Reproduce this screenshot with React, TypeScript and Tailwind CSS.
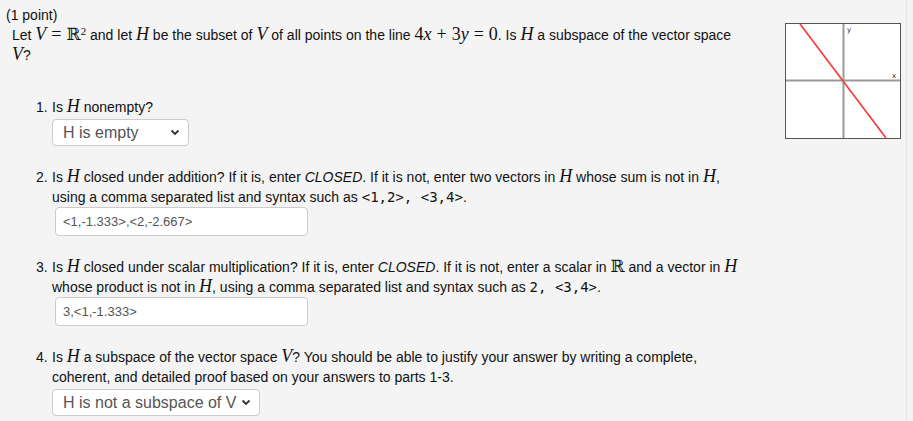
import React from 'react';

// math helpers (MathJax look-alike)
const V = ({ children }: { children: React.ReactNode }) => (
  <span className="font-['Liberation_Serif'] italic text-[18px] leading-none">{children}</span>
);
const N = ({ children }: { children: React.ReactNode }) => (
  <span className="font-['Liberation_Serif'] text-[18px] leading-none">{children}</span>
);
const Op = ({ children }: { children: React.ReactNode }) => (
  <span className="font-['Liberation_Serif'] text-[18px] leading-none mx-[5px]">{children}</span>
);
const R = () => <span className="font-['DejaVu_Serif'] text-[17px] leading-none">ℝ</span>;
const Code = ({ children }: { children: React.ReactNode }) => (
  <span className="font-['DejaVu_Sans_Mono'] text-[14px] leading-none">{children}</span>
);

const Chevron = () => (
  <svg width="10" height="7" viewBox="0 0 10 7" className="shrink-0">
    <polyline points="1.5,1.5 5,5 8.5,1.5" fill="none" stroke="#333" strokeWidth="1.8" />
  </svg>
);

const Select = ({ label, width }: { label: string; width: string }) => (
  <div className={`${width} h-[27px] mt-[2px] ml-[16px] bg-white border border-[#ccc] rounded-[4px] flex items-center justify-between pl-[10px] pr-[8px] text-[16px] text-[#555]`}>
    <span>{label}</span>
    <Chevron />
  </div>
);

const Input = ({ value }: { value: string }) => (
  <div className="w-[253px] h-[29px] ml-[19px] bg-white border border-[#ccc] rounded-[4px] flex items-center px-[7px] text-[13px] text-[#555]">
    {value}
  </div>
);

const Graph = () => (
  <svg width="116" height="116" viewBox="0 0 116 116" className="block">
    <rect x="0.5" y="0.5" width="115" height="115" fill="#fff" stroke="#555" />
    <line x1="58.5" y1="1" x2="58.5" y2="115" stroke="#999" strokeWidth="2" />
    <line x1="1" y1="57.5" x2="115" y2="57.5" stroke="#999" strokeWidth="2" />
    <line x1="15" y1="1" x2="101" y2="115" stroke="#f33" strokeWidth="1.6" />
    <text x="62" y="9" fontSize="7" fontFamily="DejaVu Sans" fill="#222">y</text>
    <text x="107" y="55" fontSize="7" fontFamily="DejaVu Sans" fill="#222">x</text>
  </svg>
);

const Item = ({ n, children }: { n: number; children: React.ReactNode }) => (
  <div className="flex">
    <span className="w-[16px] shrink-0">{n}.</span>
    <div className="flex-1">{children}</div>
  </div>
);

export default function App() {
  return (
    <div className="w-[913px] h-[421px] bg-[#f4f4f4] font-['Liberation_Sans'] text-[14px] leading-[20px] text-[#111] overflow-hidden">
      <div className="w-[907px] h-full border-r border-[#e6e6e6] flex">
        <div className="w-[748px] shrink-0 pt-[5px]">
          <div className="pl-[6px]">(1 point)</div>
          <div className="pl-[12px]">
            Let <V>V</V><Op>=</Op><R /><sup className="font-['Liberation_Serif'] text-[11px]">2</sup> and let <V>H</V> be the subset of <V>V</V> of all points on the line <N>4</N><V>x</V><Op>+</Op><N>3</N><V>y</V><Op>=</Op><N>0</N>. Is <V>H</V> a subspace of the vector space <V>V</V>?
          </div>

          <div className="pl-[36px] pt-[32px] flex flex-col gap-[21px]">
            <div>
              <Item n={1}>
                Is <V>H</V> nonempty?
              </Item>
              <Select label="H is empty" width="w-[137px]" />
            </div>

            <div>
              <Item n={2}>
                Is <V>H</V> closed under addition? If it is, enter <i>CLOSED</i>. If it is not, enter two vectors in <V>H</V> whose sum is not in <V>H</V>, using a comma separated list and syntax such as <Code>&lt;1,2&gt;, &lt;3,4&gt;</Code>.
              </Item>
              <Input value="<1,-1.333>,<2,-2.667>" />
            </div>

            <div>
              <Item n={3}>
                Is <V>H</V> closed under scalar multiplication? If it is, enter <i>CLOSED</i>. If it is not, enter a scalar in <R /> and a vector in <V>H</V> whose product is not in <V>H</V>, using a comma separated list and syntax such as <Code>2, &lt;3,4&gt;</Code>.
              </Item>
              <Input value="3,<1,-1.333>" />
            </div>

            <div>
              <Item n={4}>
                Is <V>H</V> a subspace of the vector space <V>V</V>? You should be able to justify your answer by writing a complete, coherent, and detailed proof based on your answers to parts 1-3.
              </Item>
              <Select label="H is not a subspace of V" width="w-[208px]" />
            </div>
          </div>
        </div>

        <div className="pt-[23px] pl-[37px]">
          <Graph />
        </div>
      </div>
    </div>
  );
}
